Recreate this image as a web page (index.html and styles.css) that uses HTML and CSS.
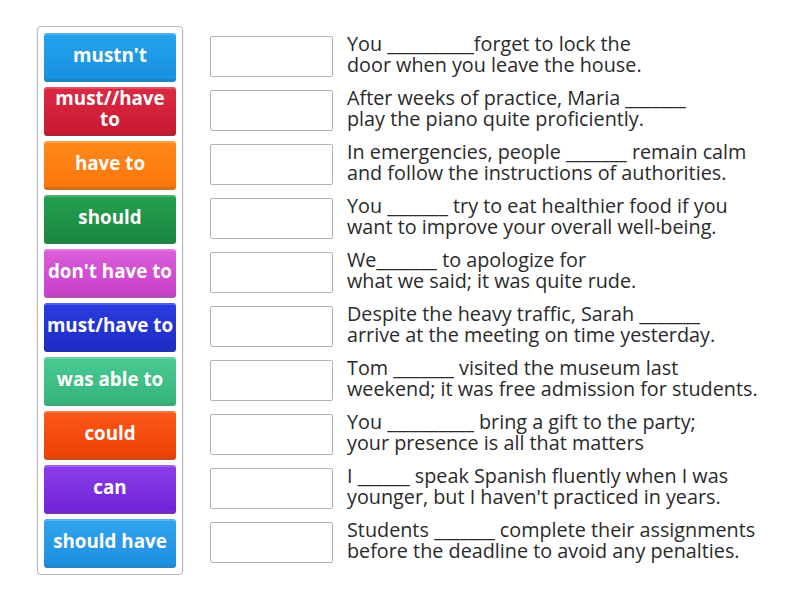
FILE: index.html
```html
<!DOCTYPE html>
<html>
<head>
<meta charset="utf-8">
<link rel="stylesheet" href="styles.css">
</head>
<body>
<div class="page">
  <div class="bank">
    <div class="tile c1">mustn't</div>
    <div class="tile c2">must//have to</div>
    <div class="tile c3">have to</div>
    <div class="tile c4">should</div>
    <div class="tile c5">don't have to</div>
    <div class="tile c6">must/have to</div>
    <div class="tile c7">was able to</div>
    <div class="tile c8">could</div>
    <div class="tile c9">can</div>
    <div class="tile c10">should have</div>
  </div>
  <div class="rows">
    <div class="row"><div class="slot"></div><div class="text">You __________forget to lock the<br>door when you leave the house.</div></div>
    <div class="row"><div class="slot"></div><div class="text">After weeks of practice, Maria _______<br>play the piano quite proficiently.</div></div>
    <div class="row"><div class="slot"></div><div class="text">In emergencies, people _______ remain calm<br>and follow the instructions of authorities.</div></div>
    <div class="row"><div class="slot"></div><div class="text">You _______ try to eat healthier food if you<br>want to improve your overall well-being.</div></div>
    <div class="row"><div class="slot"></div><div class="text">We_______ to apologize for<br>what we said; it was quite rude.</div></div>
    <div class="row"><div class="slot"></div><div class="text">Despite the heavy traffic, Sarah _______<br>arrive at the meeting on time yesterday.</div></div>
    <div class="row"><div class="slot"></div><div class="text">Tom _______ visited the museum last<br>weekend; it was free admission for students.</div></div>
    <div class="row"><div class="slot"></div><div class="text">You __________ bring a gift to the party;<br>your presence is all that matters</div></div>
    <div class="row"><div class="slot"></div><div class="text">I ______ speak Spanish fluently when I was<br>younger, but I haven't practiced in years.</div></div>
    <div class="row"><div class="slot"></div><div class="text">Students _______ complete their assignments<br>before the deadline to avoid any penalties.</div></div>
  </div>
</div>
</body>
</html>
```
FILE: styles.css
```css
html, body {
  margin: 0;
  padding: 0;
  background: #fff;
}
.page {
  display: flex;
  align-items: flex-start;
  padding: 26px 0 0 37px;
  font-family: "Open Sans", "Liberation Sans", sans-serif;
}
.bank {
  width: 132px;
  padding: 6px 6px 1px 6px;
  border: 1px solid #b9b9b9;
  border-radius: 4px;
  box-shadow: 0 1px 2px rgba(0,0,0,0.15);
}
.tile {
  height: 49px;
  margin-bottom: 5px;
  box-sizing: border-box;
  border-radius: 3px;
  display: flex;
  align-items: center;
  justify-content: center;
  text-align: center;
  color: #fff;
  font-weight: 700;
  font-size: 18.8px;
  line-height: 21px;
  padding: 0 2px 2px;
  border-bottom: 3px solid rgba(0,0,0,0.18);
  box-shadow: inset 0 2px 0 rgba(255,255,255,0.18);
}
.c1 { background: linear-gradient(#27a3ee, #1791e0); }
.c2 { background: linear-gradient(#dc2a44, #c91a32); }
.c3 { background: linear-gradient(#ff8a1d, #fb750a); }
.c4 { background: linear-gradient(#25a150, #1b8640); }
.c5 { background: linear-gradient(#da5fda, #c940c9); }
.c6 { background: linear-gradient(#2a3de0, #1f2cc5); }
.c7 { background: linear-gradient(#4acb92, #36b47d); }
.c8 { background: linear-gradient(#fa5a1a, #ee4004); }
.c9 { background: linear-gradient(#8b3de8, #7024d8); }
.c10 { background: linear-gradient(#33a4ee, #1d8fe0); }
.rows {
  margin-left: 27px;
  padding-top: 7px;
}
.row {
  display: flex;
  align-items: flex-start;
  height: 49px;
  margin-bottom: 5px;
}
.slot {
  width: 121px;
  height: 39px;
  border: 1px solid #b4b4b4;
  border-radius: 2px;
  background: #fff;
  flex: none;
  margin-top: 3px;
}
.text {
  margin-left: 14px;
  margin-top: 0;
  font-size: 19.8px;
  line-height: 21px;
  color: #2a2a2a;
  white-space: nowrap;
}
```
